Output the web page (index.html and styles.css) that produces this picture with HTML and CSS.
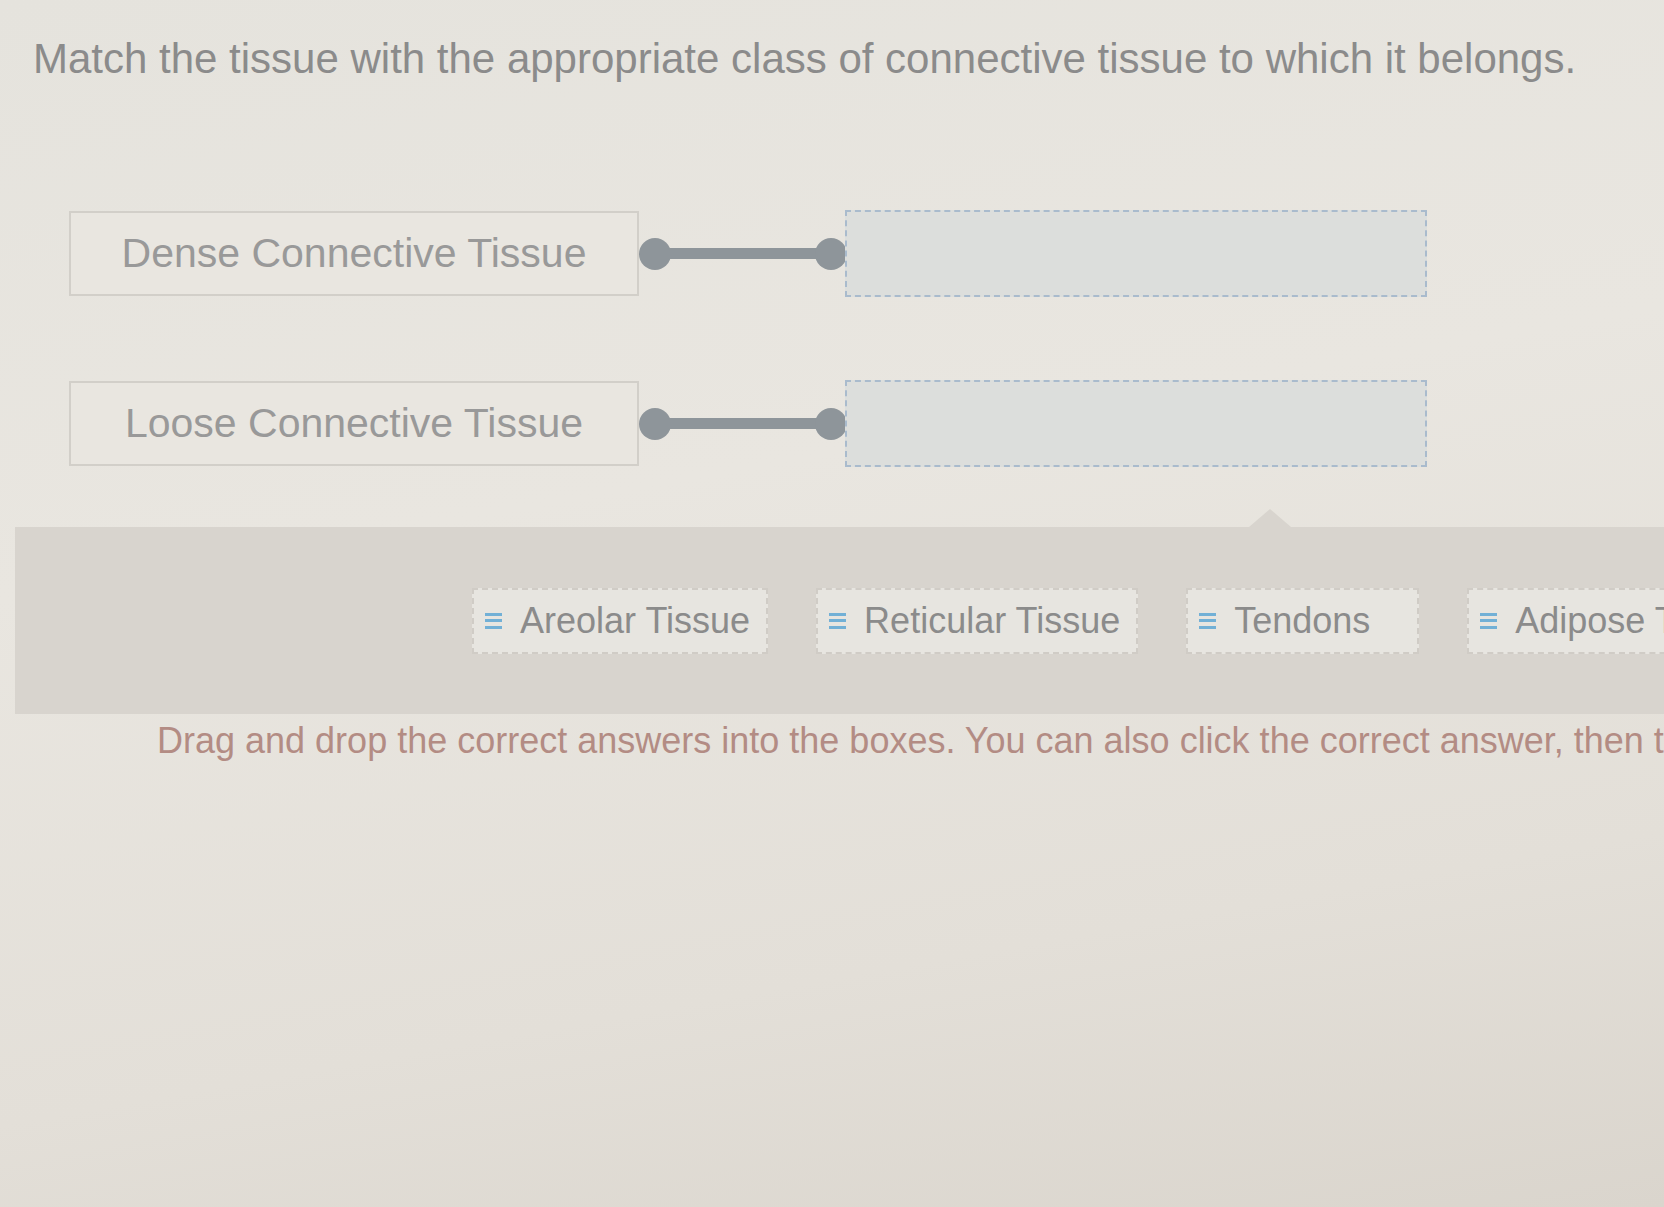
FILE: index.html
```html
<!DOCTYPE html>
<html lang="en">
<head>
  <meta charset="UTF-8" />
  <meta name="viewport" content="width=device-width, initial-scale=1.0" />
  <title>Matching</title>
  <link rel="stylesheet" href="styles.css">
</head>
<body>
  <p class="prompt">Match the tissue with the appropriate class of connective tissue to which it belongs.</p>

  <div class="pairs">
    <div class="pair">
      <div class="term">Dense Connective Tissue</div>
      <div class="link"><span class="dot"></span><span class="bar"></span><span class="dot"></span></div>
      <div class="target"></div>
    </div>
    <div class="pair">
      <div class="term">Loose Connective Tissue</div>
      <div class="link"><span class="dot"></span><span class="bar"></span><span class="dot"></span></div>
      <div class="target"></div>
    </div>
  </div>

  <div class="bank">
    <div class="chip"><span class="grip"></span>Areolar Tissue</div>
    <div class="chip"><span class="grip"></span>Reticular Tissue</div>
    <div class="chip wide"><span class="grip"></span>Tendons</div>
    <div class="chip"><span class="grip"></span>Adipose Tissue</div>
  </div>

  <p class="hint">Drag and drop the correct answers into the boxes. You can also click the correct answer, then the box.</p>
</body>
</html>
```

FILE: styles.css
```css
:root {
  --text-gray: #8b8b8b;
  --term-gray: #999999;
  --link: #8e959a;
  --band: #d8d4ce;
  --hint: #b38c84;
}

html, body {
  height: 100%;
}

body {
  font-family: 'Liberation Sans', Arial, sans-serif;
  margin: 0;
  padding: 0;
  overflow: hidden;
  background: linear-gradient(170deg, #e5e3dd 0%, #e9e6e0 40%, #e3dfd8 75%, #dad5cd 100%);
}

.prompt {
  margin: 0;
  padding: 35px 0 0 33px;
  font-size: 42px;
  line-height: 48px;
  color: var(--text-gray);
  white-space: nowrap;
}

.pairs {
  margin-top: 127px;
  padding-left: 69px;
  display: flex;
  flex-direction: column;
  gap: 83px;
}

.pair {
  display: flex;
  align-items: center;
}

.term {
  width: 570px;
  height: 85px;
  box-sizing: border-box;
  border: 2px solid #d2cfc9;
  background: #e9e6e0;
  color: var(--term-gray);
  font-size: 41px;
  display: flex;
  align-items: center;
  justify-content: center;
}

.link {
  width: 208px;
  height: 32px;
  display: flex;
  align-items: center;
}

.link .dot {
  width: 32px;
  height: 32px;
  border-radius: 50%;
  background: var(--link);
  flex: none;
}

.link .bar {
  flex: 1;
  height: 11px;
  margin: 0 -4px;
  background: var(--link);
}

.target {
  width: 582px;
  height: 87px;
  box-sizing: border-box;
  border: 2px dashed #a9bbcd;
  background: #dcdedc;
  margin-left: -2px;
}

.bank {
  position: relative;
  margin: 60px 0 0 15px;
  padding: 61px 0 60px 457px;
  background: var(--band);
  display: flex;
  gap: 48px;
}

.bank::before {
  content: "";
  position: absolute;
  top: -18px;
  left: 1234px;
  border-left: 21px solid transparent;
  border-right: 21px solid transparent;
  border-bottom: 18px solid var(--band);
}

.chip {
  flex: none;
  height: 66px;
  box-sizing: border-box;
  padding: 0 16px 0 11px;
  border: 2px dashed #d0ccc6;
  background: #e7e5e0;
  color: var(--text-gray);
  font-size: 36px;
  display: flex;
  align-items: center;
  gap: 18px;
  white-space: nowrap;
}

.chip.wide {
  width: 233px;
}

.grip {
  width: 17px;
  height: 16px;
  background: linear-gradient(#72b0d6 0 3px, transparent 3px 6.5px, #72b0d6 6.5px 9.5px, transparent 9.5px 13px, #72b0d6 13px 16px);
}

.hint {
  margin: 7px 0 0;
  padding-left: 157px;
  font-size: 36px;
  line-height: 40px;
  color: var(--hint);
  white-space: nowrap;
}
```
